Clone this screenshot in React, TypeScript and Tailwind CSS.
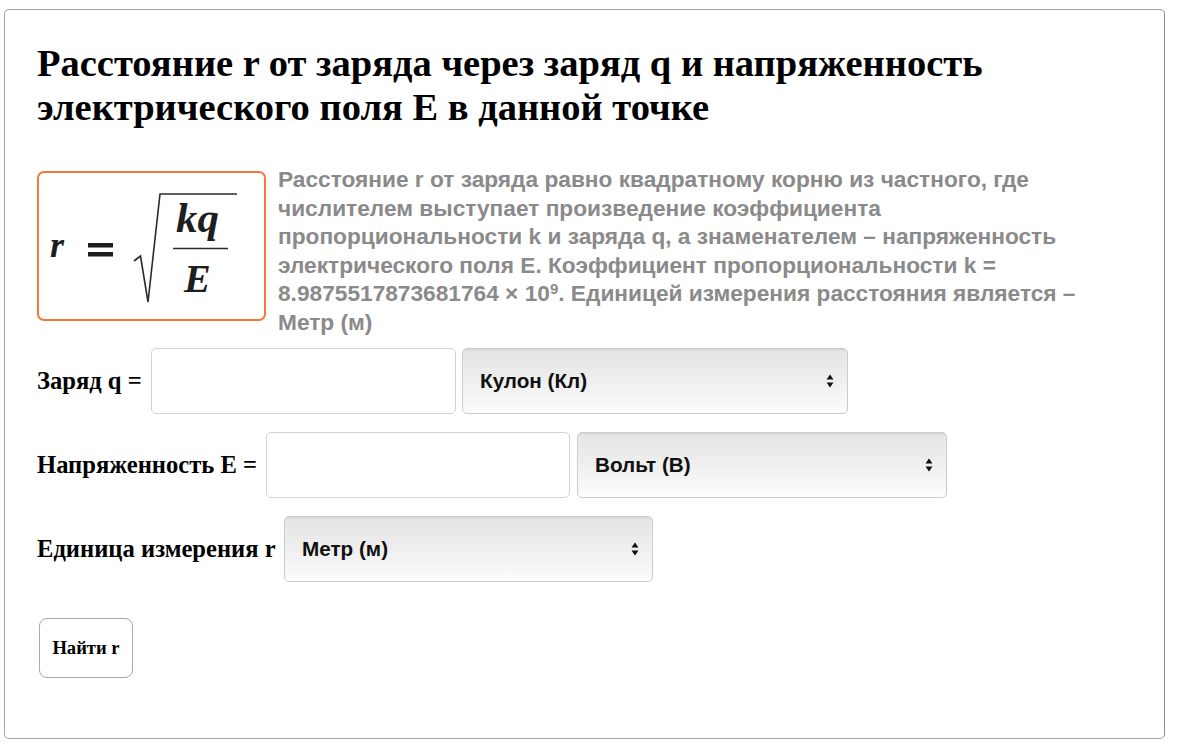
import React from "react";

const serif = { fontFamily: '"Liberation Serif", "Times New Roman", serif' } as const;
const sans = { fontFamily: '"Liberation Sans", Arial, sans-serif' } as const;

function Arrows() {
  return (
    <svg width="8" height="14" viewBox="0 0 8 14" className="pointer-events-none absolute right-[14px] top-1/2 -translate-y-1/2">
      <path d="M0.5 5.5 L4 0.5 L7.5 5.5 Z" fill="#111" />
      <path d="M0.5 8.5 L4 13.5 L7.5 8.5 Z" fill="#111" />
    </svg>
  );
}

function Select({ value, width }: { value: string; width: string }) {
  return (
    <div className={`relative h-[66px] ${width}`}>
      <div
        className="flex h-full w-full items-center rounded-[5px] border border-[#cbcbcb] bg-linear-to-b from-[#e4e4e4] via-[#efefef] to-[#fcfcfc] pl-[17px] text-[20.7px] font-bold text-[#111] shadow-[inset_0_-2px_3px_rgba(255,255,255,0.9),inset_0_1px_2px_rgba(0,0,0,0.08)]"
        style={sans}
      >
        {value}
      </div>
      <Arrows />
    </div>
  );
}

function Input({ width }: { width: string }) {
  return <div className={`h-[66px] ${width} rounded-[5px] border border-[#d2d2d2] bg-white`} />;
}

function Formula() {
  return (
    <div className="h-[150px] w-[229px] shrink-0 rounded-[7px] border-2 border-[#f5783a] bg-white">
      <svg width="225" height="146" viewBox="2 2 225 146" style={serif}>
        <text x="13" y="86" fontSize="36" fontStyle="italic" fontWeight="bold" fill="#1e1e1e">r</text>
        <rect x="51" y="72" width="25" height="4.5" fill="#1e1e1e" />
        <rect x="51" y="81" width="25" height="4.5" fill="#1e1e1e" />
        <path d="M97 90 L103.5 85 L111 131 L123 23 L200 23" fill="none" stroke="#2a2a2a" strokeWidth="1.6" strokeLinejoin="miter" />
        <text x="139" y="61" fontSize="43" fontStyle="italic" fontWeight="bold" fill="#1e1e1e">kq</text>
        <line x1="136" y1="77.5" x2="191" y2="77.5" stroke="#2a2a2a" strokeWidth="1.6" />
        <text x="147" y="121" fontSize="40" fontStyle="italic" fontWeight="bold" fill="#1e1e1e">E</text>
      </svg>
    </div>
  );
}

export default function App() {
  return (
    <div className="min-h-[756px] w-[1200px] bg-white pl-[4px] pt-[9px]">
      <div className="h-[730px] w-[1161px] rounded-[5px] border border-[#aba59d] border-r-[#958d83] pl-[32px]">
        <h1 className="mt-[31px] text-[38.5px] font-bold leading-[44px] text-black" style={serif}>
          Расстояние r от заряда через заряд q и напряженность
          <br />
          электрического поля E в данной точке
        </h1>
        <div className="mt-[42px] flex gap-[12px]">
          <Formula />
          <p className="-mt-[6px] text-[22.7px] font-bold leading-[28.5px] text-[#8a8a8a]" style={sans}>
            Расстояние r от заряда равно квадратному корню из частного, где
            <br />
            числителем выступает произведение коэффициента
            <br />
            пропорциональности k и заряда q, а знаменателем – напряженность
            <br />
            электрического поля E. Коэффициент пропорциональности k =
            <br />
            8.9875517873681764 × 10<sup className="text-[15px]">9</sup>. Единицей измерения расстояния является –
            <br />
            Метр (м)
          </p>
        </div>
        <div className="mt-[12px] flex flex-col gap-[18px]">
          <div className="flex items-center">
            <span className="w-[114px] text-[24.6px] font-bold text-black" style={serif}>Заряд q =</span>
            <Input width="w-[305px]" />
            <div className="w-[6px]" />
            <Select value="Кулон (Кл)" width="w-[386px]" />
          </div>
          <div className="flex items-center">
            <span className="w-[229px] text-[24.6px] font-bold text-black" style={serif}>Напряженность E =</span>
            <Input width="w-[304px]" />
            <div className="w-[7px]" />
            <Select value="Вольт (В)" width="w-[370px]" />
          </div>
          <div className="flex items-center">
            <span className="w-[247px] text-[24.6px] font-bold text-black" style={serif}>Единица измерения r</span>
            <Select value="Метр (м)" width="w-[369px]" />
          </div>
        </div>
        <button
          className="ml-[2px] mt-[36px] h-[60px] w-[94px] rounded-[8px] border border-[#a9a9a9] bg-white text-[18.6px] font-bold text-black"
          style={serif}
        >
          Найти r
        </button>
      </div>
    </div>
  );
}
